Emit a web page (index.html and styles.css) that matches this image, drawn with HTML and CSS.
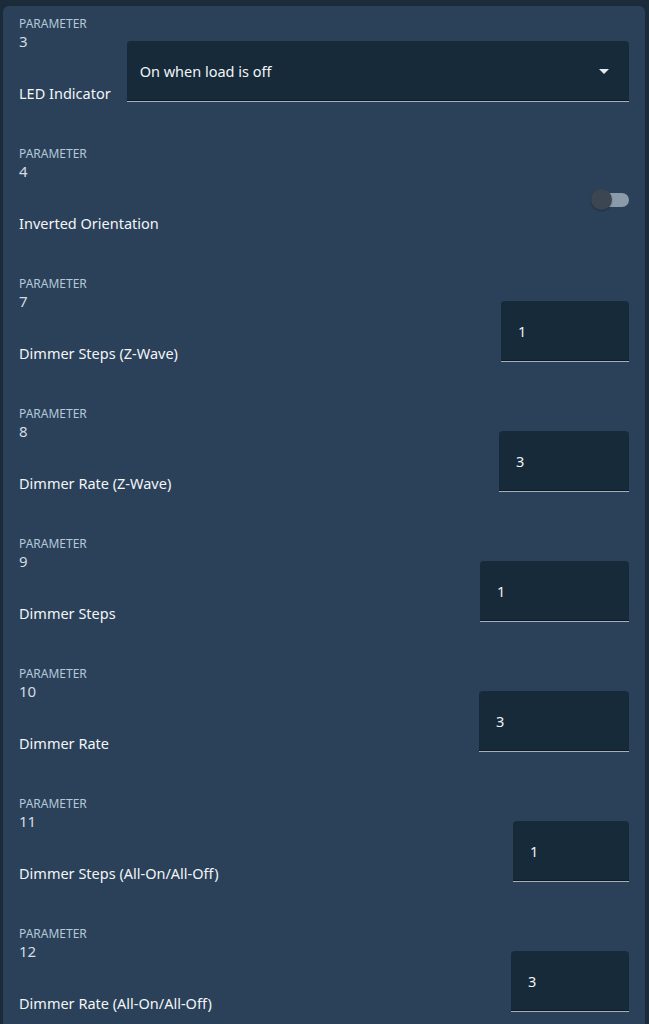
FILE: index.html
```html
<!DOCTYPE html>
<html lang="en">
<head>
  <meta charset="UTF-8" />
  <meta name="viewport" content="width=device-width, initial-scale=1.0"/>
  <title>Configuration</title>
  <link rel="stylesheet" href="styles.css">
</head>
<body>

  <div class="card">

    <div class="param">
      <div class="info">
        <div class="label">Parameter</div>
        <div class="num">3</div>
        <div class="title">LED Indicator</div>
      </div>
      <div class="select">
        <span>On when load is off</span>
        <svg class="arrow" width="10" height="5" viewBox="0 0 10 5"><path d="M0 0 L10 0 L5 5 Z" fill="#e6ebf0"/></svg>
      </div>
    </div>

    <div class="param">
      <div class="info">
        <div class="label">Parameter</div>
        <div class="num">4</div>
        <div class="title">Inverted Orientation</div>
      </div>
      <div class="switch">
        <div class="track"></div>
        <div class="thumb"></div>
      </div>
    </div>

    <div class="param">
      <div class="info">
        <div class="label">Parameter</div>
        <div class="num">7</div>
        <div class="title">Dimmer Steps (Z-Wave)</div>
      </div>
      <div class="field w128">1</div>
    </div>

    <div class="param">
      <div class="info">
        <div class="label">Parameter</div>
        <div class="num">8</div>
        <div class="title">Dimmer Rate (Z-Wave)</div>
      </div>
      <div class="field w130">3</div>
    </div>

    <div class="param">
      <div class="info">
        <div class="label">Parameter</div>
        <div class="num">9</div>
        <div class="title">Dimmer Steps</div>
      </div>
      <div class="field w149">1</div>
    </div>

    <div class="param">
      <div class="info">
        <div class="label">Parameter</div>
        <div class="num">10</div>
        <div class="title">Dimmer Rate</div>
      </div>
      <div class="field w150">3</div>
    </div>

    <div class="param">
      <div class="info">
        <div class="label">Parameter</div>
        <div class="num">11</div>
        <div class="title">Dimmer Steps (All-On/All-Off)</div>
      </div>
      <div class="field w116">1</div>
    </div>

    <div class="param">
      <div class="info">
        <div class="label">Parameter</div>
        <div class="num">12</div>
        <div class="title">Dimmer Rate (All-On/All-Off)</div>
      </div>
      <div class="field w118">3</div>
    </div>

  </div>

</body>
</html>
```

FILE: styles.css
```css
:root {
  --page-bg: #1b2b39;
  --card-bg: #2b4159;
  --field-bg: #172a3a;
  --label-color: #b4c8da;
  --num-color: #d3dbe3;
  --text-color: #f2f5f8;
  --line-color: #a3b0bd;
}

body {
  font-family: 'Noto Sans', 'Open Sans', sans-serif;
  background-color: var(--page-bg);
  color: var(--text-color);
  margin: 0;
  padding: 6px 4px 0 3px;
}

.card {
  background-color: var(--card-bg);
  border-radius: 6px 6px 0 0;
  padding: 11px 16px 20px;
}

.param {
  display: flex;
  align-items: flex-end;
  justify-content: space-between;
  margin-bottom: 44px;
}

.info {
  flex-shrink: 0;
  margin-right: 16px;
}

.label {
  font-size: 12px;
  line-height: 14px;
  text-transform: uppercase;
  color: var(--label-color);
}

.num {
  font-size: 15px;
  line-height: 20px;
  color: var(--num-color);
}

.title {
  margin-top: 32px;
  font-size: 14.5px;
  line-height: 20px;
  color: var(--text-color);
}

.select,
.field {
  box-sizing: border-box;
  height: 61px;
  margin-bottom: 1px;
  background-color: var(--field-bg);
  border-radius: 4px 4px 0 0;
  border-bottom: 1px solid var(--line-color);
  box-shadow: inset 0 -1px 0 #0d1923;
  display: flex;
  align-items: center;
  font-size: 14.5px;
  color: var(--text-color);
}

.select {
  flex: 1;
  justify-content: space-between;
  padding: 0 20px 0 13px;
}

.field {
  padding-left: 17px;
}

.w128 { width: 128px; }
.w130 { width: 130px; }
.w149 { width: 149px; }
.w150 { width: 150px; }
.w116 { width: 116px; }
.w118 { width: 118px; }

.switch {
  position: relative;
  width: 38px;
  height: 20px;
  margin-bottom: 23px;
}

.switch .track {
  position: absolute;
  left: 2px;
  top: 3px;
  width: 36px;
  height: 14px;
  border-radius: 7px;
  background-color: #8b9bab;
}

.switch .thumb {
  position: absolute;
  left: 0;
  top: -1px;
  width: 21px;
  height: 21px;
  border-radius: 50%;
  background-color: #3c4651;
  box-shadow: 0 1px 2px rgba(0, 0, 0, 0.3);
}
```
